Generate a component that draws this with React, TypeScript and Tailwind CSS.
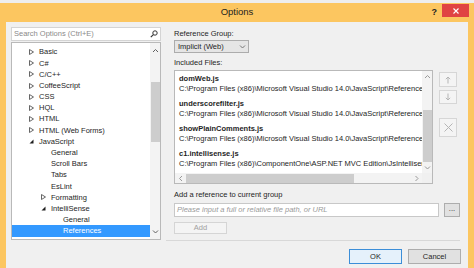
import React from "react";

type Node = { label: string; level: 0 | 1 | 2; arrow?: "closed" | "open"; selected?: boolean };

const TREE: Node[] = [
  { label: "Basic", level: 0, arrow: "closed" },
  { label: "C#", level: 0, arrow: "closed" },
  { label: "C/C++", level: 0, arrow: "closed" },
  { label: "CoffeeScript", level: 0, arrow: "closed" },
  { label: "CSS", level: 0, arrow: "closed" },
  { label: "HQL", level: 0, arrow: "closed" },
  { label: "HTML", level: 0, arrow: "closed" },
  { label: "HTML (Web Forms)", level: 0, arrow: "closed" },
  { label: "JavaScript", level: 0, arrow: "open" },
  { label: "General", level: 1 },
  { label: "Scroll Bars", level: 1 },
  { label: "Tabs", level: 1 },
  { label: "EsLint", level: 1 },
  { label: "Formatting", level: 1, arrow: "closed" },
  { label: "IntelliSense", level: 1, arrow: "open" },
  { label: "General", level: 2 },
  { label: "References", level: 2, selected: true },
  { label: "JSON", level: 0, arrow: "closed" },
];

const FILES = [
  { name: "domWeb.js", path: "C:\\Program Files (x86)\\Microsoft Visual Studio 14.0\\JavaScript\\References\\domWeb.js" },
  { name: "underscorefilter.js", path: "C:\\Program Files (x86)\\Microsoft Visual Studio 14.0\\JavaScript\\References\\underscorefilter.js" },
  { name: "showPlainComments.js", path: "C:\\Program Files (x86)\\Microsoft Visual Studio 14.0\\JavaScript\\References\\showPlainComments.js" },
  { name: "c1.intellisense.js", path: "C:\\Program Files (x86)\\ComponentOne\\ASP.NET MVC Edition\\JsIntellisense\\c1.intellisense.js" },
];

const INDENT = { 0: "pl-[15px]", 1: "pl-[27px]", 2: "pl-[39px]" };

function Arrow({ kind, light }: { kind?: "closed" | "open"; light?: boolean }) {
  const c = light ? "#ffffff" : "#1e1e1e";
  return (
    <span className="w-[12px] h-full flex items-center shrink-0">
      {kind === "closed" && (
        <svg width="5" height="6" viewBox="0 0 5 6" className="ml-[2px]">
          <polygon points="0.5,0.5 4.5,3 0.5,5.5" fill="none" stroke="#555" strokeWidth="0.9" />
        </svg>
      )}
      {kind === "open" && (
        <svg width="5" height="5" viewBox="0 0 5 5" className="ml-[2px]">
          <polygon points="4.5,0.5 4.5,4.5 0.5,4.5" fill={c} />
        </svg>
      )}
    </span>
  );
}

function Chevron({ dir, color = "#606060" }: { dir: "up" | "down" | "left" | "right"; color?: string }) {
  const pts = {
    up: "1,4 3.5,1.5 6,4",
    down: "1,1.5 3.5,4 6,1.5",
    left: "4,1 1.5,3.5 4,6",
    right: "1.5,1 4,3.5 1.5,6",
  }[dir];
  const horiz = dir === "left" || dir === "right";
  return (
    <svg width={horiz ? 6 : 7} height={horiz ? 7 : 6} viewBox={horiz ? "0 0 6 7" : "0 0 7 6"}>
      <polyline points={pts} fill="none" stroke={color} strokeWidth="1" />
    </svg>
  );
}

export default function App() {
  return (
    <div
      className="w-[474px] h-[268px] overflow-hidden bg-[#eeeeee] pt-[3px] text-[7.5px] text-[#1e1e1e]"
      style={{ fontFamily: '"Liberation Sans", Arial, sans-serif' }}
    >
      <div className="h-[265px] bg-[#fcc660] flex flex-col">
        {/* Title bar */}
        <div className="h-[19px] shrink-0 relative flex items-center justify-center">
          <span className="text-[9.5px] text-[#1e1e1e] -mt-[1px]">Options</span>
          <span className="absolute right-[37px] top-[3px] text-[9px] font-bold text-[#222]">?</span>
          <div className="absolute right-[5px] top-[1px] w-[27px] h-[13px] bg-[#e04343] flex items-center justify-center">
            <svg width="6" height="6" viewBox="0 0 6 6">
              <path d="M0.5 0.5 L5.5 5.5 M5.5 0.5 L0.5 5.5" stroke="#fff" strokeWidth="1.1" />
            </svg>
          </div>
        </div>

        {/* Client area */}
        <div className="flex-1 mx-[6px] bg-[#f0f0f0] flex pt-[5px] pl-[5px]">
          {/* Left column */}
          <div className="w-[150px] shrink-0 flex flex-col">
            <div className="h-[14px] bg-white border border-[#d4d4d4] flex items-center pl-[2px] pr-[2px]">
              <span className="flex-1 text-[#8a8a8a]">Search Options (Ctrl+E)</span>
              <svg width="8" height="8" viewBox="0 0 8 8">
                <circle cx="5" cy="3" r="2.2" fill="none" stroke="#333" strokeWidth="1" />
                <path d="M3.4 4.6 L0.8 7.2" stroke="#333" strokeWidth="1.2" />
              </svg>
            </div>
            <div className="mt-[1px] h-[198px] bg-white border border-[#b9b9b9] flex overflow-hidden">
              <div className="flex-1 pt-[3.4px] overflow-hidden">
                {TREE.map((n, i) => (
                  <div
                    key={i}
                    className={`h-[11.2px] flex items-center ${INDENT[n.level]} ${n.selected ? "bg-[#3399ff] text-white" : ""}`}
                  >
                    <Arrow kind={n.arrow} light={n.selected} />
                    <span className="whitespace-nowrap">{n.label}</span>
                  </div>
                ))}
              </div>
              <div className="w-[10px] bg-[#f3f3f3] flex flex-col items-center">
                <div className="h-[12px] flex items-center justify-center pt-[3px]">
                  <Chevron dir="up" />
                </div>
                <div className="w-[9px] h-[60px] mt-[27px] bg-[#cdcdcd]" />
                <div className="flex-1" />
                <div className="h-[12px] flex items-center justify-center mb-[1px]">
                  <Chevron dir="down" />
                </div>
              </div>
            </div>
          </div>

          {/* Right column */}
          <div className="ml-[13px] flex-1 flex flex-col pr-[7px]">
            <div className="h-[13px] flex items-center pt-[1px]">Reference Group:</div>
            <div className="w-[75px] h-[13px] bg-[#e5e5e5] border border-[#acacac] flex items-center pl-[3px] pr-[2px]">
              <span className="flex-1">Implicit (Web)</span>
              <Chevron dir="down" color="#777" />
            </div>
            <div className="h-[17px] flex items-end pb-[2px]">Included Files:</div>

            <div className="flex">
              <div className="w-[259px] h-[114px] bg-white border border-[#b9b9b9] flex flex-col overflow-hidden">
                <div className="flex-1 flex overflow-hidden">
                  <div className="flex-1 overflow-hidden pl-[4px] pt-[3px] flex flex-col gap-[5px]">
                    {FILES.map((f) => (
                      <div key={f.name} className="leading-[10px] whitespace-nowrap">
                        <div className="font-bold">{f.name}</div>
                        <div>{f.path}</div>
                      </div>
                    ))}
                  </div>
                  <div className="w-[10px] bg-[#f3f3f3] flex flex-col items-center">
                    <div className="h-[11px] flex items-center justify-center pt-[1px]">
                      <Chevron dir="up" color="#9a9a9a" />
                    </div>
                    <div className="w-[9px] h-[52px] mt-[28px] bg-[#cdcdcd]" />
                    <div className="flex-1" />
                    <div className="h-[10px] flex items-center justify-center">
                      <Chevron dir="down" color="#9a9a9a" />
                    </div>
                  </div>
                </div>
                <div className="h-[10px] flex">
                  <div className="flex-1 bg-[#f3f3f3] flex items-center">
                    <div className="w-[11px] flex justify-center">
                      <Chevron dir="left" color="#9a9a9a" />
                    </div>
                    <div className="w-[168px] h-[9px] bg-[#cdcdcd]" />
                    <div className="flex-1" />
                    <div className="w-[11px] flex justify-center">
                      <Chevron dir="right" color="#9a9a9a" />
                    </div>
                  </div>
                  <div className="w-[10px] bg-[#f0f0f0]" />
                </div>
              </div>

              <div className="ml-[6px] flex flex-col pt-[2px]">
                <div className="w-[18px] h-[15px] bg-[#f4f4f4] border border-[#d6d6d6] flex items-center justify-center">
                  <svg width="6" height="8" viewBox="0 0 6 8">
                    <path d="M3 7.5 V1 M0.8 3.2 L3 1 L5.2 3.2" fill="none" stroke="#b5b5b5" strokeWidth="1" />
                  </svg>
                </div>
                <div className="mt-[3px] w-[18px] h-[14px] bg-[#f4f4f4] border border-[#d6d6d6] flex items-center justify-center">
                  <svg width="6" height="8" viewBox="0 0 6 8">
                    <path d="M3 0.5 V7 M0.8 4.8 L3 7 L5.2 4.8" fill="none" stroke="#b5b5b5" strokeWidth="1" />
                  </svg>
                </div>
                <div className="mt-[14px] w-[18px] h-[19px] bg-[#f4f4f4] border border-[#d6d6d6] flex items-center justify-center">
                  <svg width="9" height="9" viewBox="0 0 9 9">
                    <path d="M0.5 0.5 L8.5 8.5 M8.5 0.5 L0.5 8.5" stroke="#b5b5b5" strokeWidth="1" />
                  </svg>
                </div>
              </div>
            </div>

            <div className="h-[19px] flex items-end pb-[3px]">Add a reference to current group</div>
            <div className="flex items-center">
              <div className="w-[265px] h-[14px] bg-white border border-[#c8c8c8] flex items-center pl-[2px] overflow-hidden">
                <span className="italic text-[#9a9a9a] whitespace-nowrap">Please input a full or relative file path, or URL</span>
              </div>
              <div className="ml-[5px] w-[16px] h-[14px] bg-[#e1e1e1] border border-[#adadad] flex items-center justify-center leading-none">
                <span className="-mt-[2px]">...</span>
              </div>
            </div>
            <div className="mt-[5px] w-[53px] h-[12px] bg-[#f4f4f4] border border-[#d5d5d5] flex items-center justify-center text-[#a0a0a0]">
              Add
            </div>
            <div className="mt-[6px] h-px bg-[#d8d8d8] -ml-[8px] mr-[1px]" />
            <div className="mt-[8px] flex justify-end gap-[6px]">
              <div className="w-[53px] h-[15px] bg-[#e5f1fb] border border-[#3c8ed8] flex items-center justify-center">OK</div>
              <div className="w-[53px] h-[15px] bg-[#e1e1e1] border border-[#adadad] flex items-center justify-center">Cancel</div>
            </div>
          </div>
        </div>
      </div>
    </div>
  );
}
